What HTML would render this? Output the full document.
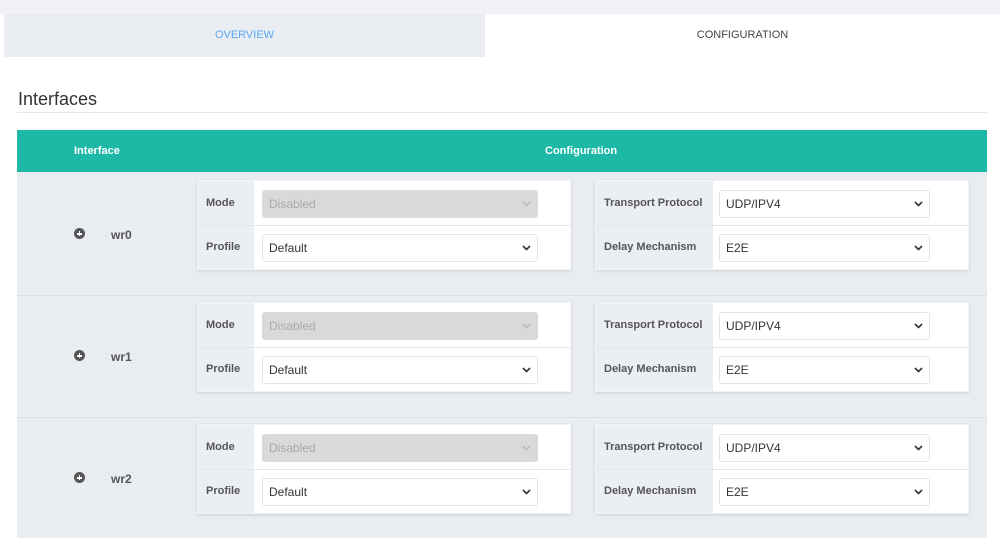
<!DOCTYPE html>
<html><head><meta charset="utf-8"><style>
*{box-sizing:border-box;margin:0;padding:0}
body{width:1000px;height:539px;overflow:hidden;background:#fff;font-family:"Liberation Sans",Arial,sans-serif;position:relative}
.top{position:absolute;left:0;top:0;width:1000px;height:14px;background:#f0f2f5}
.tab{position:absolute;top:14px;height:43px;line-height:43px;text-align:center;font-size:11px}
.t1{left:4px;width:481px;background:#e9ecf1;color:#5aa9f5}
.t2{left:485px;width:515px;background:#fff;color:#444}
h2{position:absolute;left:18px;top:89px;font-size:18px;font-weight:normal;color:#333}
.hr{position:absolute;left:17px;top:112px;width:970px;height:1px;background:#e6e8eb}
.head{position:absolute;left:17px;top:130px;width:970px;height:42px;background:#1eb8a6;color:#fff;font-weight:bold;font-size:11px}
.head span{position:absolute;top:15px}
.row{position:absolute;left:17px;width:970px;background:#e9ecf1;border-top:1px solid #dcdfe4}
.ic{position:absolute;left:57px;width:11px;height:11px;border-radius:50%;background:#555}
.ic:before{content:"";position:absolute;left:3px;top:5px;width:5px;height:1.6px;background:#fff}
.ic:after{content:"";position:absolute;left:4.7px;top:3px;width:1.6px;height:5px;background:#fff}
.nm{position:absolute;left:94px;font-size:12px;font-weight:bold;color:#555}
.card{position:absolute;height:90px;background:#fff;box-shadow:0 1px 3px rgba(0,0,0,.12);border:1px solid #f3f4f6}
.lab{position:absolute;left:0;top:0;height:88px;background:#ebeef2}
.sep{position:absolute;left:0;right:0;top:44px;height:1px;background:#e3e5e9}
.l{position:absolute;left:8px;font-size:11px;font-weight:bold;color:#555}
.sel{position:absolute;height:28px;border:1px solid #e2e4e8;border-radius:3px;background:#fff;font-size:12px;color:#333;line-height:26px;padding-left:6px}
.sel.dis{background:#d9d9d9;color:#aaa;border-color:#d9d9d9}
.sel svg{position:absolute;right:6px;top:10px}
</style></head><body>
<div class="top"></div>
<div class="tab t1">OVERVIEW</div>
<div class="tab t2">CONFIGURATION</div>
<h2>Interfaces</h2>
<div class="hr"></div>
<div class="head"><span style="left:57px">Interface</span><span style="left:528px">Configuration</span></div>

<div class="row" style="top:172px;height:123px;border-top:none"></div>
<div class="row" style="top:295px;height:122px"></div>
<div class="row" style="top:417px;height:121px"></div>

<!-- rows generated -->
<div id="rows"></div>
<script></script>
<div style="position:absolute;left:0;top:0">
<!-- row 0 -->
<div class="ic" style="left:74px;top:228px"></div><div class="nm" style="left:111px;top:228px">wr0</div>
<div class="card" style="left:197px;top:180px;width:374px"><div class="lab" style="width:56px"></div><div class="sep"></div>
<div class="l" style="top:16px">Mode</div><div class="l" style="top:60px">Profile</div>
<div class="sel dis" style="left:64px;top:9px;width:276px">Disabled<svg width="9" height="6"><path d="M1 1l3.5 3.5L8 1" stroke="#bbb" stroke-width="1.6" fill="none"/></svg></div>
<div class="sel" style="left:64px;top:53px;width:276px">Default<svg width="9" height="6"><path d="M1 1l3.5 3.5L8 1" stroke="#333" stroke-width="1.6" fill="none"/></svg></div></div>
<div class="card" style="left:595px;top:180px;width:374px"><div class="lab" style="width:117px"></div><div class="sep"></div>
<div class="l" style="top:16px">Transport Protocol</div><div class="l" style="top:60px">Delay Mechanism</div>
<div class="sel" style="left:123px;top:9px;width:211px">UDP/IPV4<svg width="9" height="6"><path d="M1 1l3.5 3.5L8 1" stroke="#333" stroke-width="1.6" fill="none"/></svg></div>
<div class="sel" style="left:123px;top:53px;width:211px">E2E<svg width="9" height="6"><path d="M1 1l3.5 3.5L8 1" stroke="#333" stroke-width="1.6" fill="none"/></svg></div></div>
<!-- row 1 -->
<div class="ic" style="left:74px;top:350px"></div><div class="nm" style="left:111px;top:350px">wr1</div>
<div class="card" style="left:197px;top:302px;width:374px"><div class="lab" style="width:56px"></div><div class="sep"></div>
<div class="l" style="top:16px">Mode</div><div class="l" style="top:60px">Profile</div>
<div class="sel dis" style="left:64px;top:9px;width:276px">Disabled<svg width="9" height="6"><path d="M1 1l3.5 3.5L8 1" stroke="#bbb" stroke-width="1.6" fill="none"/></svg></div>
<div class="sel" style="left:64px;top:53px;width:276px">Default<svg width="9" height="6"><path d="M1 1l3.5 3.5L8 1" stroke="#333" stroke-width="1.6" fill="none"/></svg></div></div>
<div class="card" style="left:595px;top:302px;width:374px"><div class="lab" style="width:117px"></div><div class="sep"></div>
<div class="l" style="top:16px">Transport Protocol</div><div class="l" style="top:60px">Delay Mechanism</div>
<div class="sel" style="left:123px;top:9px;width:211px">UDP/IPV4<svg width="9" height="6"><path d="M1 1l3.5 3.5L8 1" stroke="#333" stroke-width="1.6" fill="none"/></svg></div>
<div class="sel" style="left:123px;top:53px;width:211px">E2E<svg width="9" height="6"><path d="M1 1l3.5 3.5L8 1" stroke="#333" stroke-width="1.6" fill="none"/></svg></div></div>
<!-- row 2 -->
<div class="ic" style="left:74px;top:472px"></div><div class="nm" style="left:111px;top:472px">wr2</div>
<div class="card" style="left:197px;top:424px;width:374px"><div class="lab" style="width:56px"></div><div class="sep"></div>
<div class="l" style="top:16px">Mode</div><div class="l" style="top:60px">Profile</div>
<div class="sel dis" style="left:64px;top:9px;width:276px">Disabled<svg width="9" height="6"><path d="M1 1l3.5 3.5L8 1" stroke="#bbb" stroke-width="1.6" fill="none"/></svg></div>
<div class="sel" style="left:64px;top:53px;width:276px">Default<svg width="9" height="6"><path d="M1 1l3.5 3.5L8 1" stroke="#333" stroke-width="1.6" fill="none"/></svg></div></div>
<div class="card" style="left:595px;top:424px;width:374px"><div class="lab" style="width:117px"></div><div class="sep"></div>
<div class="l" style="top:16px">Transport Protocol</div><div class="l" style="top:60px">Delay Mechanism</div>
<div class="sel" style="left:123px;top:9px;width:211px">UDP/IPV4<svg width="9" height="6"><path d="M1 1l3.5 3.5L8 1" stroke="#333" stroke-width="1.6" fill="none"/></svg></div>
<div class="sel" style="left:123px;top:53px;width:211px">E2E<svg width="9" height="6"><path d="M1 1l3.5 3.5L8 1" stroke="#333" stroke-width="1.6" fill="none"/></svg></div></div>
</div>
</body></html>
